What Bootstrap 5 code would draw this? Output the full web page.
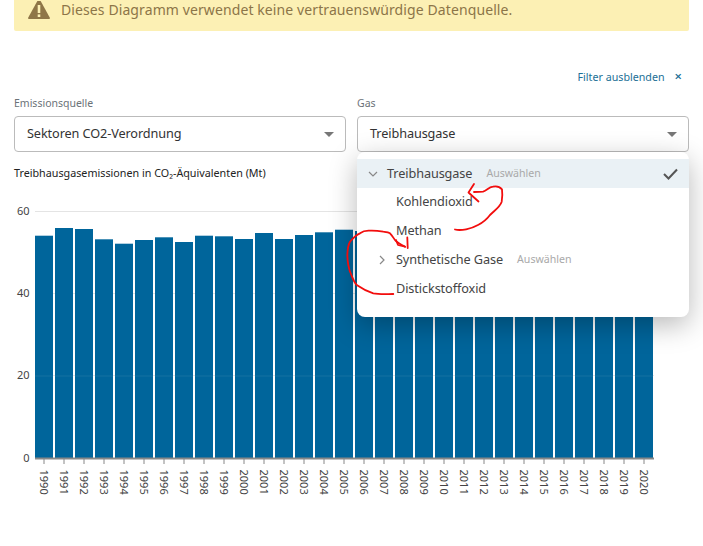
<!DOCTYPE html>
<html lang="de">
<head>
    <meta charset="UTF-8">
    <meta name="viewport" content="width=device-width, initial-scale=1.0">
    <title>Treibhausgasemissionen</title>
    <link href="https://cdn.jsdelivr.net/npm/bootstrap@5.3.0/dist/css/bootstrap.min.css" rel="stylesheet">
    <style>
        html, body {
            height: 546px;
            overflow: hidden;
        }
        body {
            font-family: "Noto Sans", sans-serif;
            color: #333;
            background: #fff;
            position: relative;
        }
        .page {
            padding: 0 14px;
        }
        .warn {
            height: 31px;
            background: #fcf0b4;
            color: #8c7548;
            font-size: 14px;
            line-height: 16px;
            letter-spacing: .1px;
            border-radius: 0 0 2px 2px;
            padding: 0 14px 12px;
            margin-bottom: 38px;
        }
        .warn svg {
            width: 22px;
            height: 18px;
            flex: none;
        }
        .warn-text {
            margin-left: 3px;
        }
        .filter-toggle {
            height: 16px;
            font-size: 10.7px;
            color: #1c6f96;
            margin-bottom: 11px;
            padding-right: 7px;
        }
        .filter-toggle .close-x {
            font-size: 13px;
            font-weight: 600;
            margin-left: 10px;
        }
        .filters {
            gap: 11px;
        }
        .filter-label {
            font-size: 10.5px;
            line-height: 14px;
            color: #6b7278;
            margin-bottom: 6px;
        }
        .fake-select {
            height: 36px;
            border: 1px solid #bbb;
            border-radius: 4px;
            background: #fff;
            padding: 0 11px 0 12px;
            font-size: 12.7px;
            letter-spacing: -.1px;
            color: #333;
        }
        .caret {
            width: 0;
            height: 0;
            border-left: 5px solid transparent;
            border-right: 5px solid transparent;
            border-top: 5px solid #777;
        }
        .gas-menu {
            top: 100%;
            left: 0;
            width: 100%;
            height: 165px;
            margin-top: 0;
            padding: 7px 0 0;
            border: 0;
            border-radius: 8px;
            box-shadow: 0 8px 28px rgba(0, 0, 0, .28);
            z-index: 5;
        }
        .gas-menu .dropdown-item {
            height: 29px;
            padding: 0 11px 1px 39px;
            font-size: 12.7px;
            letter-spacing: -.1px;
            color: #444;
        }
        .gas-menu .dropdown-item.current {
            background: #eaf1f5;
            padding-left: 11px;
            padding-bottom: 0;
        }
        .gas-menu .nested {
            position: relative;
        }
        .gas-menu .pick {
            font-size: 10.6px;
            letter-spacing: 0;
            color: #a9a9a9;
            margin-left: 14px;
        }
        .gas-menu svg {
            flex: none;
        }
        .chev-open {
            margin-right: 9px;
        }
        .chev-closed {
            position: absolute;
            left: 22px;
            top: 9px;
        }
        .chart-title {
            font-size: 10.75px;
            line-height: 14px;
            margin-top: 14px;
            margin-bottom: 10px;
            color: #222;
        }
        .chart {
            display: block;
            width: 675px;
            height: 356px;
        }
        .chart text {
            font-family: "Noto Sans", sans-serif;
            font-size: 11px;
            fill: #444;
        }
        .scribble {
            position: absolute;
            top: 0;
            left: 0;
            z-index: 10;
            pointer-events: none;
        }
    </style>
</head>
<body>
    <div class="page">
        <div class="warn d-flex align-items-center gap-2">
            <svg viewBox="0 0 22 18">
                <path d="M11 -3 L22 17 Q22 18 21 18 L1 18 Q0 18 0 17 Z" fill="#8f7647"/>
                <rect x="9.7" y="4" width="2.6" height="8" fill="#fcf0b4"/>
                <rect x="9.7" y="13.4" width="2.6" height="2.6" fill="#fcf0b4"/>
            </svg>
            <span class="warn-text">Dieses Diagramm verwendet keine vertrauenswürdige Datenquelle.</span>
        </div>

        <div class="filter-toggle d-flex justify-content-end align-items-center">
            <span>Filter ausblenden</span><span class="close-x">×</span>
        </div>

        <div class="filters d-flex">
            <div class="flex-fill w-50">
                <div class="filter-label">Emissionsquelle</div>
                <div class="fake-select d-flex align-items-center justify-content-between">
                    <span>Sektoren CO2-Verordnung</span><span class="caret"></span>
                </div>
            </div>
            <div class="flex-fill w-50">
                <div class="filter-label">Gas</div>
                <div class="position-relative">
                    <div class="fake-select d-flex align-items-center justify-content-between">
                        <span>Treibhausgase</span><span class="caret"></span>
                    </div>
                    <div class="dropdown-menu show gas-menu">
                        <div class="dropdown-item current d-flex align-items-center">
                            <svg class="chev-open" width="10" height="6" viewBox="0 0 10 6"><path d="M1 1 L5 5 L9 1" fill="none" stroke="#888" stroke-width="1.2"/></svg>
                            <span>Treibhausgase</span><span class="pick">Auswählen</span>
                            <svg class="ms-auto" width="15" height="12" viewBox="0 0 15 12"><path d="M1 6 L5.5 10.5 L14 1.5" fill="none" stroke="#555" stroke-width="2"/></svg>
                        </div>
                        <div class="dropdown-item d-flex align-items-center">Kohlendioxid</div>
                        <div class="dropdown-item d-flex align-items-center">Methan</div>
                        <div class="dropdown-item nested d-flex align-items-center">
                            <svg class="chev-closed" width="6" height="10" viewBox="0 0 6 10"><path d="M1 1 L5 5 L1 9" fill="none" stroke="#888" stroke-width="1.2"/></svg>
                            <span>Synthetische Gase</span><span class="pick">Auswählen</span>
                        </div>
                        <div class="dropdown-item d-flex align-items-center">Distickstoffoxid</div>
                    </div>
                </div>
            </div>
        </div>

        <div class="chart-title">Treibhausgasemissionen in CO₂-Äquivalenten (Mt)</div>
        <svg id="chart" class="chart" viewBox="14 190 675 356"></svg>
    </div>

    <svg class="scribble" width="703" height="546" viewBox="0 0 703 546" fill="none" stroke="#f20d0d" stroke-width="1.8" stroke-linecap="round" stroke-linejoin="round">
        <path d="M455 229.5 C461 231 471 229 478 225 C484 222 487 219 490 215 C495 210 500 207 501.7 201.7 C502.5 197 502.5 193 502 189.3 C499 186 496 186 493 186.7 C489 187 486 191 483 191.7 C480 192 477 192 474 192"/>
        <path d="M474 184 L468.5 192.5 L478.5 201.5"/>
        <path d="M393.3 294 C386 294 379 294.5 373.3 293.3 C366 291 361 288 356.7 285 C353 281 352 276 350 271.7 C348 266 347.5 260 347.3 255 C347.5 250 348 245 350 241.7 C353 238 356 235 360 233.3 C363 231 367 230.5 370 230.7 C375 230.5 379 231 383.3 231.7 C386 232 388 232 390 233.3 C393 236 394 240 396.7 241.7 C399 244 402 245 405 246.7"/>
        <path d="M396 240 L398 245 L405 246.7 M407.3 237.5 L407.7 248"/>
    </svg>

    <script>
        document.addEventListener('DOMContentLoaded', function() {
            const chart = document.getElementById('chart');
            const tops = [235.7, 228, 229, 239.3, 243.7, 240, 237.3, 242, 235.7, 236.3, 239, 233, 239, 235, 232.3, 229.7, 231,
                          240, 245, 250, 255, 258, 262, 265, 263, 268, 270, 272, 268, 272, 285];
            const baseY = 458;
            let html = '';

            [[211.5, '60'], [293.5, '40'], [375.5, '20']].forEach(function(grid) {
                html += `<line x1="35" x2="654" y1="${grid[0]}" y2="${grid[0]}" stroke="#e4e4e4"/>`;
            });
            [[215, '60'], [297, '40'], [379, '20'], [462, '0']].forEach(function(label) {
                html += `<text x="29.5" y="${label[0]}" text-anchor="end">${label[1]}</text>`;
            });

            tops.forEach(function(top, i) {
                const x = 35 + i * 20;
                const year = 1990 + i;
                html += `<rect x="${x}" y="${top}" width="18" height="${baseY - top}" fill="#00659b"/>`;
                html += `<line x1="${x + 9}" x2="${x + 9}" y1="458" y2="464" stroke="#888"/>`;
                html += `<text transform="translate(${x + 5},469.5) rotate(90)">${year}</text>`;
            });

            html += '<line x1="35" x2="654" y1="376" y2="376" stroke="rgba(255,255,255,.08)"/>';
            html += '<line x1="35" x2="654" y1="458.5" y2="458.5" stroke="#888" stroke-width="2"/>';
            chart.innerHTML = html;
        });
    </script>
    <script src="https://cdn.jsdelivr.net/npm/bootstrap@5.3.0/dist/js/bootstrap.bundle.min.js"></script>
</body>
</html>
